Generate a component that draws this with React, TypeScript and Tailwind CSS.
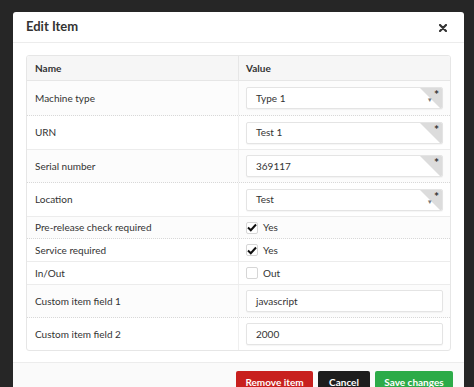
import React from "react"

type Row =
  | { label: string; kind: "select" | "input"; value: string; required?: boolean; h: string; dotted?: boolean }
  | { label: string; kind: "check"; value: string; checked: boolean; h: string; dotted?: boolean }

const ROWS: Row[] = [
  { label: "Machine type", kind: "select", value: "Type 1", required: true, h: "h-[35px]", dotted: true },
  { label: "URN", kind: "input", value: "Test 1", required: true, h: "h-[34px]" },
  { label: "Serial number", kind: "input", value: "369117", required: true, h: "h-[33px]", dotted: true },
  { label: "Location", kind: "select", value: "Test", required: true, h: "h-[34px]" },
  { label: "Pre-release check required", kind: "check", value: "Yes", checked: true, h: "h-[22px]", dotted: true },
  { label: "Service required", kind: "check", value: "Yes", checked: true, h: "h-[23px]" },
  { label: "In/Out", kind: "check", value: "Out", checked: false, h: "h-[23px]" },
  { label: "Custom item field 1", kind: "input", value: "javascript", h: "h-[33px]", dotted: true },
  { label: "Custom item field 2", kind: "input", value: "2000", h: "h-[32px]" },
]

function Field({ value, select, required }: { value: string; select?: boolean; required?: boolean }) {
  return (
    <div className="relative flex h-[22px] w-full items-center overflow-hidden rounded-[2px] border border-[#e4e4e4] bg-white pl-[9px] text-[10px] text-[#333] shadow-[0_1px_1px_rgba(0,0,0,0.04)]">
      {value}
      {required && (
        <div className="absolute right-0 top-0 h-0 w-0 border-l-[22px] border-t-[22px] border-l-transparent border-t-[#dcdcdc]" />
      )}
      {required && <span className="absolute right-[3px] top-[-2px] text-[12px] font-bold text-[#333]">*</span>}
      {select && <span className="absolute right-[10px] top-[6px] text-[7px] text-[#777]">▾</span>}
    </div>
  )
}

function Check({ checked }: { checked: boolean }) {
  return (
    <div className="flex h-[12px] w-[12px] items-center justify-center rounded-[2px] border border-[#d6d6d6] bg-white">
      {checked && (
        <svg width="10" height="9" viewBox="0 0 10 9">
          <path d="M1 4.5 L3.8 7.2 L9 1.5" stroke="#111" strokeWidth="2" fill="none" />
        </svg>
      )}
    </div>
  )
}

export default function App() {
  return (
    <div className="h-[387px] w-[474px] overflow-hidden bg-[#262626] pl-[13px] pt-[12px]" style={{ fontFamily: "Lato, 'Open Sans', sans-serif" }}>
      <div className="w-[451px] rounded-t-[3px] bg-white">
        {/* Header */}
        <div className="flex h-[31px] items-center justify-between border-b border-[#ececec] pl-[13px] pr-[17px]">
          <span className="text-[13px] font-bold text-[#333]">Edit Item</span>
          <svg width="8" height="8" viewBox="0 0 8 8" className="mt-[2px]">
            <path d="M1 1 L7 7 M7 1 L1 7" stroke="#333" strokeWidth="2.2" strokeLinecap="round" />
          </svg>
        </div>

        {/* Body */}
        <div className="px-[13px] pt-[12px] pb-[11px]">
          <div className="overflow-hidden rounded-[3px] border border-[#e6e6e6] text-[10px] text-[#333]">
            <div className="flex h-[25px] border-b border-[#e6e6e6] bg-[#f6f6f6] font-bold">
              <div className="flex w-[212px] items-center border-r border-[#e6e6e6] pl-[8px]">Name</div>
              <div className="flex flex-1 items-center pl-[7px]">Value</div>
            </div>
            {ROWS.map((r, i) => (
              <div
                key={r.label}
                className={`flex ${r.h} ${i < ROWS.length - 1 ? "border-b" : ""} ${r.dotted ? "border-dotted border-[#d8d8d8] bg-[#fcfcfc]" : "border-[#ececec]"}`}
              >
                <div className="flex w-[212px] items-center border-r border-[#efefef] pl-[8px]">{r.label}</div>
                <div className="flex flex-1 items-center gap-[5px] pl-[7px] pr-[7px]">
                  {r.kind === "check" ? (
                    <>
                      <Check checked={r.checked} />
                      <span>{r.value}</span>
                    </>
                  ) : (
                    <Field value={r.value} select={r.kind === "select"} required={r.required} />
                  )}
                </div>
              </div>
            ))}
          </div>
        </div>

        {/* Footer */}
        <div className="flex justify-end gap-[5px] border-t border-[#ececec] bg-[#fafafa] pr-[11px] pt-[8px] pb-[6px]">
          <button className="h-[22px] w-[77px] rounded-[2px] bg-[#c8201e] text-[10px] font-bold text-white">Remove item</button>
          <button className="h-[22px] w-[52px] rounded-[2px] bg-[#1d1d1d] text-[10px] font-bold text-white">Cancel</button>
          <button className="h-[22px] w-[78px] rounded-[2px] bg-[#2cab48] text-[10px] font-bold text-white">Save changes</button>
        </div>
      </div>
    </div>
  )
}
